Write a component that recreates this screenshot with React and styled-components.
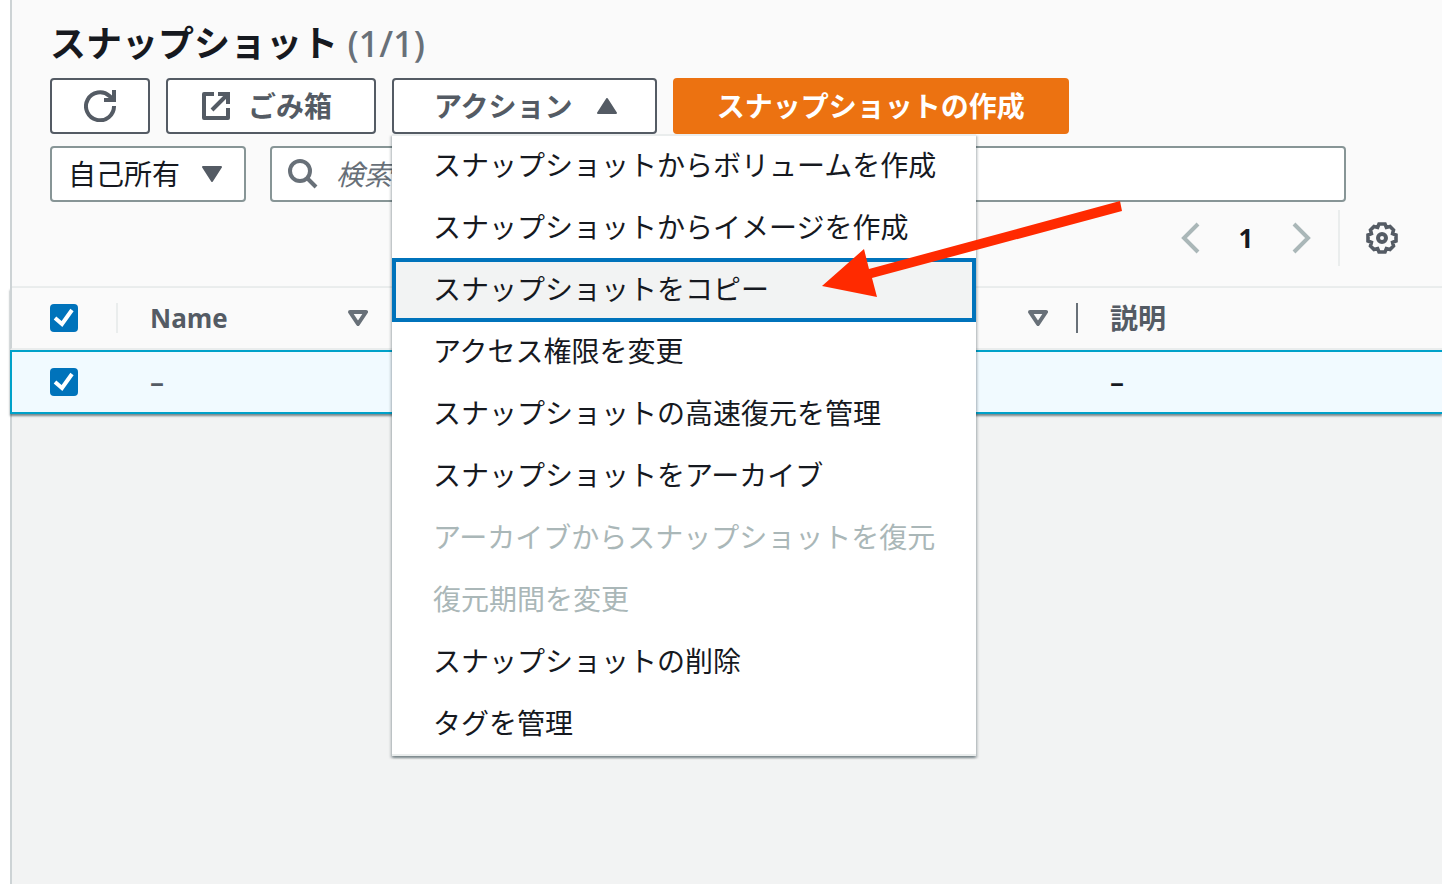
import React, { useState } from 'react';
import styled, { createGlobalStyle } from 'styled-components';

const GlobalStyle = createGlobalStyle`
  * {
    box-sizing: border-box;
  }

  body {
    margin: 0;
    background: #fff;
    color: #16191f;
    font-family: "Open Sans", "Noto Sans CJK JP", sans-serif;
    font-size: 28px;
  }

  button, input, select {
    font: inherit;
    color: inherit;
  }
`;

const Page = styled.main`
  min-height: 100vh;
  margin-left: 10px;
  background: #f2f3f3;
  border-left: 2px solid #cdd3d5;
`;

const Panel = styled.section`
  background: #fafafa;
`;

const PanelHeader = styled.header`
  display: flex;
  flex-direction: column;
  padding: 20px 44px 20px 38px;
  border-bottom: 2px solid #eaeded;
`;

const Title = styled.h1`
  margin: 0 0 10px;
  font-family: "Noto Sans", "Noto Sans CJK JP", sans-serif;
  font-size: 36px;
  line-height: 48px;
  font-weight: 700;
`;

const Counter = styled.span`
  color: #687078;
  font-weight: 500;
`;

const Toolbar = styled.div`
  display: flex;
  gap: 16px;
`;

const Button = styled.button`
  display: flex;
  align-items: center;
  justify-content: center;
  gap: 16px;
  height: 56px;
  padding: 0 42px;
  border: 2px solid ${props => props.$primary ? '#ec7211' : '#545b64'};
  border-radius: 4px;
  background: ${props => props.$primary ? '#ec7211' : '#fff'};
  color: ${props => props.$primary ? '#fff' : '#545b64'};
  font-weight: 700;
  line-height: 40px;
  white-space: nowrap;
  cursor: pointer;
`;

const IconButton = styled(Button)`
  padding: 0 32px;
`;

const LinkButton = styled(Button)`
  padding: 0 42px 0 32px;
`;

const MenuButton = styled(Button)`
  gap: 24px;
  padding: 0 38px 0 40px;
`;

const Dropdown = styled.div`
  position: relative;
`;

const Menu = styled.ul`
  position: absolute;
  z-index: 2;
  top: 100%;
  left: 0;
  margin: 0;
  padding: 0;
  list-style: none;
  background: #fff;
  box-shadow: 0 2px 2px rgba(0, 28, 36, .3), 2px 2px 2px rgba(0, 28, 36, .15), -2px 2px 2px rgba(0, 28, 36, .15);

  li + li {
    margin-top: -2px;
  }

  li:first-child button {
    border-top-color: #eaeded;
  }

  li:last-child button {
    border-bottom-color: #eaeded;
  }
`;

const MenuItem = styled.button`
  display: block;
  width: 100%;
  height: 64px;
  padding: 0 40px 2px 41px;
  border: solid transparent;
  border-width: 2px 0;
  background: none;
  line-height: 40px;
  text-align: left;
  white-space: nowrap;
  cursor: pointer;

  &:disabled {
    color: #aab7b8;
    cursor: default;
  }

  ${props => props.$active && `
    background: #f2f3f3;
    outline: 4px solid #0073bb;
    outline-offset: -4px;
  `}
`;

const Filters = styled.div`
  display: flex;
  gap: 24px;
  margin-top: 12px;
  padding-right: 52px;
`;

const SelectBox = styled.label`
  display: grid;
  grid-template-columns: 1fr 56px;
  align-items: center;
  width: 196px;
  height: 56px;
  border: 2px solid #879596;
  border-radius: 4px;
  background: #fff;

  select {
    grid-area: 1 / 1 / 2 / 3;
    height: 52px;
    padding: 0 0 0 16px;
    border: 0;
    background: none;
    appearance: none;
  }

  svg {
    grid-area: 1 / 2;
    margin-left: 14px;
    pointer-events: none;
  }
`;

const SearchBox = styled.label`
  display: flex;
  flex: 1;
  align-items: center;
  gap: 18px;
  height: 56px;
  padding: 0 16px;
  border: 2px solid #879596;
  border-radius: 4px;
  background: #fff;

  input {
    flex: 1;
    min-width: 0;
    height: 52px;
    padding: 0;
    border: 0;
    outline: 0;
    background: none;
  }

  input::placeholder {
    color: #687078;
    font-style: italic;
    opacity: 1;
  }
`;

const Pagination = styled.nav`
  display: flex;
  align-items: center;
  align-self: flex-end;
  height: 56px;
  margin-top: 8px;
`;

const PageButton = styled.button`
  display: flex;
  align-items: center;
  justify-content: center;
  width: 56px;
  height: 56px;
  padding: 0;
  border: 0;
  background: none;
  font-weight: ${props => props.$current ? 700 : 400};
  font-size: 26px;
`;

const Settings = styled(PageButton)`
  width: 60px;
  margin-left: 8px;
  padding-left: 26px;
  border-left: 2px solid #eaeded;
`;

const Table = styled.table`
  width: calc(100% + 2px);
  margin-left: -2px;
  border-collapse: separate;
  border-spacing: 0;
  table-layout: fixed;
  line-height: 40px;
  text-align: left;
  box-shadow: 0 2px 2px rgba(0, 28, 36, .5);
`;

const Column = styled.col`
  width: ${props => props.$width};
`;

const HeadCell = styled.th`
  height: 62px;
  padding: 0 0 0 ${props => props.$first ? 38 : 0}px;
  border-bottom: 2px solid #eaeded;
  color: #545b64;
  font-size: ${props => props.$latin ? 26 : 28}px;

  &:first-child {
    border-left: 2px solid #cdd3d5;
  }
`;

const HeadContent = styled.div`
  display: flex;
  align-items: center;
  justify-content: space-between;
  height: 30px;
  padding: 0 28px 0 ${props => props.$first ? 0 : 32}px;
  border-right: 2px solid ${props => props.$divider || 'transparent'};
`;

const Cell = styled.td`
  height: 64px;
  padding: 0 0 2px ${props => props.$first ? 38 : 32}px;
  border: solid #00a1c9;
  border-width: 2px 0;
  background: #f1faff;
  color: ${props => props.$muted ? '#545b64' : '#16191f'};
  font-weight: 600;

  &:first-child {
    padding-bottom: 0;
    border-left-width: 2px;
  }
`;

const Checkbox = styled.input`
  display: block;
  width: 28px;
  height: 28px;
  margin: 0;
  border-radius: 4px;
  background: #0073bb;
  appearance: none;
  cursor: pointer;
`;

const CheckWrap = styled.label`
  display: grid;
  width: 28px;

  > * {
    grid-area: 1 / 1;
  }

  svg {
    pointer-events: none;
  }
`;

const Arrow = styled.svg`
  position: absolute;
  z-index: 3;
  top: 122px;
  left: 428px;
  pointer-events: none;
`;

const actions = [
  { label: 'スナップショットからボリュームを作成' },
  { label: 'スナップショットからイメージを作成' },
  { label: 'スナップショットをコピー' },
  { label: 'アクセス権限を変更' },
  { label: 'スナップショットの高速復元を管理' },
  { label: 'スナップショットをアーカイブ' },
  { label: 'アーカイブからスナップショットを復元', disabled: true },
  { label: '復元期間を変更', disabled: true },
  { label: 'スナップショットの削除' },
  { label: 'タグを管理' },
];

const RefreshIcon = () => (
  <svg width="32" height="32" viewBox="0 0 32 32" fill="none" stroke="currentColor" strokeWidth="4">
    <path d="M30 16A14 14 0 1 1 25.5 6L30 10" />
    <path d="M20 10H30V0" />
  </svg>
);

const ExternalIcon = () => (
  <svg width="32" height="32" viewBox="0 0 32 32" fill="none" stroke="currentColor" strokeWidth="4">
    <path d="M14 4H4V28H28V18" strokeLinejoin="round" />
    <path d="M18 4H28V14M28 4L12 20" />
  </svg>
);

const Caret = ({ up }) => (
  <svg width="20" height="16" viewBox="0 0 20 16" fill="#545b64" stroke="#545b64" strokeWidth="2" strokeLinejoin="round">
    <path d={up ? 'M10 1L19 15H1Z' : 'M10 15L19 1H1Z'} />
  </svg>
);

const SortIcon = () => (
  <svg width="20" height="16" viewBox="0 0 20 16" fill="none" stroke="#687078" strokeWidth="4" strokeLinejoin="round">
    <path d="M10 14L18 2H2Z" />
  </svg>
);

const SearchIcon = () => (
  <svg width="30" height="30" viewBox="0 0 30 30" fill="none" stroke="#687078" strokeWidth="4">
    <circle cx="12" cy="12" r="10" />
    <path d="M19 19L28 28" />
  </svg>
);

const Chevron = ({ next }) => (
  <svg width="20" height="32" viewBox="0 0 20 32" fill="none" stroke="#aab7b8" strokeWidth="4">
    <path d={next ? 'M2 2L16 16L2 30' : 'M18 2L4 16L18 30'} />
  </svg>
);

const GearIcon = () => (
  <svg width="32" height="32" viewBox="0 0 32 32" fill="none" stroke="#545b64" strokeWidth="4">
    <path
      d="M13 2H19L20.4 5.4L24 4.5L27.5 8L26.6 11.6L30 13V19L26.6 20.4L27.5 24L24 27.5L20.4 26.6L19 30H13L11.6 26.6L8 27.5L4.5 24L5.4 20.4L2 19V13L5.4 11.6L4.5 8L8 4.5L11.6 5.4Z"
      strokeWidth="3.6"
    />
    <circle cx="16" cy="16" r="4" />
  </svg>
);

const Check = ({ label }) => {
  const [checked, setChecked] = useState(true);

  return (
    <CheckWrap>
      <Checkbox type="checkbox" aria-label={label} checked={checked} onChange={() => setChecked(!checked)} />
      {checked && (
        <svg width="28" height="28" viewBox="0 0 28 28" fill="none" stroke="#fff" strokeWidth="4">
          <path d="M5 14L12 20L22 6" />
        </svg>
      )}
    </CheckWrap>
  );
};

const App = () => {
  const [open, setOpen] = useState(true);
  const [active, setActive] = useState(2);
  const [query, setQuery] = useState('');

  return (
    <Page>
      <GlobalStyle />
      <Panel>
        <PanelHeader>
          <Title>スナップショット <Counter>(1/1)</Counter></Title>
          <Toolbar>
            <IconButton aria-label="更新"><RefreshIcon /></IconButton>
            <LinkButton><ExternalIcon />ごみ箱</LinkButton>
            <Dropdown>
              <MenuButton aria-expanded={open} onClick={() => setOpen(!open)}>アクション<Caret up /></MenuButton>
              {open && (
                <Menu>
                  {actions.map((action, index) => (
                    <li key={action.label}>
                      <MenuItem
                        disabled={action.disabled}
                        $active={index === active}
                        onMouseEnter={() => setActive(index)}
                      >
                        {action.label}
                      </MenuItem>
                    </li>
                  ))}
                </Menu>
              )}
              <Arrow width="304" height="98" viewBox="0 0 304 98" fill="#ff2a00">
                <path d="M2 86L44 49L49 69L300 1L302 11L52 78L57 97Z" />
              </Arrow>
            </Dropdown>
            <Button $primary>スナップショットの作成</Button>
          </Toolbar>
          <Filters>
            <SelectBox>
              <select aria-label="所有者"><option>自己所有</option></select>
              <Caret />
            </SelectBox>
            <SearchBox>
              <SearchIcon />
              <input placeholder="検索" aria-label="検索" value={query} onChange={e => setQuery(e.target.value)} />
            </SearchBox>
          </Filters>
          <Pagination>
            <PageButton aria-label="前へ"><Chevron /></PageButton>
            <PageButton $current>1</PageButton>
            <PageButton aria-label="次へ"><Chevron next /></PageButton>
            <Settings aria-label="設定"><GearIcon /></Settings>
          </Pagination>
        </PanelHeader>
        <Table>
          <colgroup>
            <Column $width="108px" />
            <Column $width="280px" />
            <Column $width="680px" />
            <Column />
          </colgroup>
          <thead>
            <tr>
              <HeadCell $first><HeadContent $first $divider="#eaeded"><Check label="すべて選択" /></HeadContent></HeadCell>
              <HeadCell $latin><HeadContent>Name<SortIcon /></HeadContent></HeadCell>
              <HeadCell><HeadContent $divider="#687078"><span /><SortIcon /></HeadContent></HeadCell>
              <HeadCell><HeadContent>説明</HeadContent></HeadCell>
            </tr>
          </thead>
          <tbody>
            <tr>
              <Cell $first><Check label="行を選択" /></Cell>
              <Cell $muted>–</Cell>
              <Cell />
              <Cell>–</Cell>
            </tr>
          </tbody>
        </Table>
      </Panel>
    </Page>
  );
};

export default App;
